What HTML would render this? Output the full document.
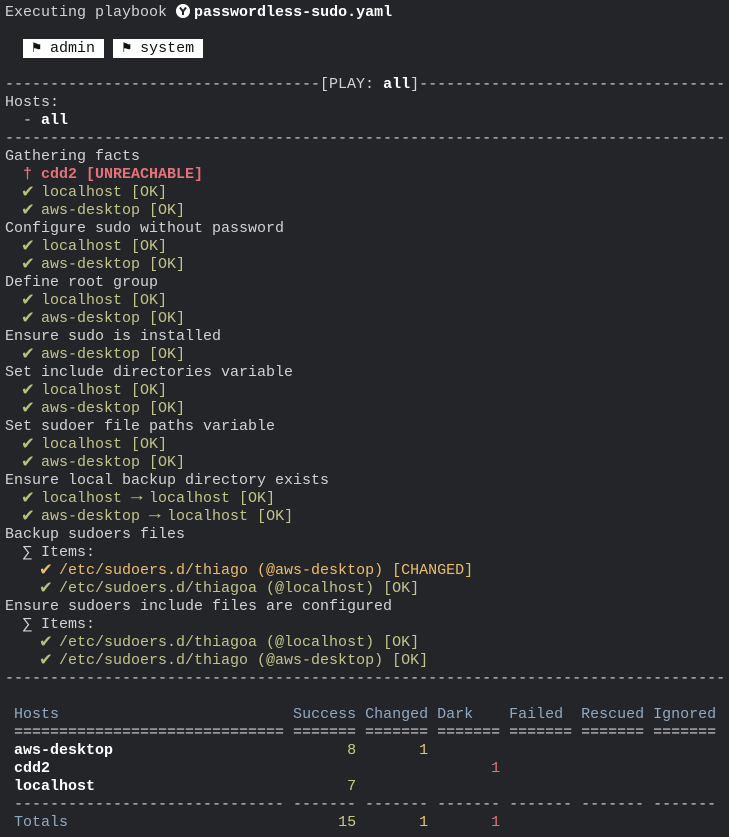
<!DOCTYPE html>
<html><head><meta charset="utf-8"><style>
html,body{margin:0;padding:0;background:#242529;width:729px;height:837px;overflow:hidden}
pre{margin:0;padding:4px 0 0 5px;font:15px/18px "Liberation Mono","DejaVu Sans Mono",monospace;color:#d2d2d2;white-space:pre}
.g{display:inline-block;width:9px;text-align:center;overflow:visible}
.k{display:inline-block;width:18px;text-align:left;font-weight:bold;transform:scale(1.25);transform-origin:3px 60%}
.a{display:inline-block;width:18px;text-align:left;transform:translateY(-2px) scale(1.3,1.1);transform-origin:0 50%}
.b{font-weight:bold;color:#fff}
.ok{color:#c2c48a}
.ok .k{color:#b9c07a}
.red{color:#e3727a;font-weight:bold}
.ch{color:#e9bd6e}
.hd{color:#8fa9c3}
.tag{background:#fff;color:#111;padding:1px 0}
.n{color:#c9c98a}.c{color:#eac56c}.r{color:#e3727a}
</style></head><body><pre>Executing playbook <span class="g"><svg width="14" height="14" viewBox="0 0 14 14" style="vertical-align:-2px"><circle cx="7" cy="7" r="7" fill="#fff"/><path d="M4 3.5L7 7.5L10 3.5M7 7.5V11" stroke="#242529" stroke-width="2" fill="none"/></svg></span> <span class="b">passwordless-sudo.yaml</span>

  <span class="tag"> <span class="g">⚑</span> admin </span> <span class="tag"> <span class="g">⚑</span> system </span>

-----------------------------------[PLAY: <span class="b">all</span>]----------------------------------
Hosts:
  - <span class="b">all</span>
--------------------------------------------------------------------------------
Gathering facts
  <span class="red"><span class="g">†</span> cdd2 [UNREACHABLE]</span>
  <span class="ok"><span class="k">✔</span>localhost [OK]</span>
  <span class="ok"><span class="k">✔</span>aws-desktop [OK]</span>
Configure sudo without password
  <span class="ok"><span class="k">✔</span>localhost [OK]</span>
  <span class="ok"><span class="k">✔</span>aws-desktop [OK]</span>
Define root group
  <span class="ok"><span class="k">✔</span>localhost [OK]</span>
  <span class="ok"><span class="k">✔</span>aws-desktop [OK]</span>
Ensure sudo is installed
  <span class="ok"><span class="k">✔</span>aws-desktop [OK]</span>
Set include directories variable
  <span class="ok"><span class="k">✔</span>localhost [OK]</span>
  <span class="ok"><span class="k">✔</span>aws-desktop [OK]</span>
Set sudoer file paths variable
  <span class="ok"><span class="k">✔</span>localhost [OK]</span>
  <span class="ok"><span class="k">✔</span>aws-desktop [OK]</span>
Ensure local backup directory exists
  <span class="ok"><span class="k">✔</span>localhost <span class="a">→</span>localhost [OK]</span>
  <span class="ok"><span class="k">✔</span>aws-desktop <span class="a">→</span>localhost [OK]</span>
Backup sudoers files
  <span class="g">∑</span> Items:
    <span class="ch"><span class="k">✔</span>/etc/sudoers.d/thiago (@aws-desktop) [CHANGED]</span>
    <span class="ok"><span class="k">✔</span>/etc/sudoers.d/thiagoa (@localhost) [OK]</span>
Ensure sudoers include files are configured
  <span class="g">∑</span> Items:
    <span class="ok"><span class="k">✔</span>/etc/sudoers.d/thiagoa (@localhost) [OK]</span>
    <span class="ok"><span class="k">✔</span>/etc/sudoers.d/thiago (@aws-desktop) [OK]</span>
--------------------------------------------------------------------------------

 <span class="hd">Hosts                          Success Changed Dark    Failed  Rescued Ignored</span>
 ============================== ======= ======= ======= ======= ======= =======
 <span class="b">aws-desktop</span>                          <span class="n">8</span>       <span class="c">1</span>
 <span class="b">cdd2</span>                                                 <span class="r">1</span>
 <span class="b">localhost</span>                            <span class="n">7</span>
 ------------------------------ ------- ------- ------- ------- ------- -------
 <span class="hd">Totals</span>                              <span class="n">15</span>       <span class="c">1</span>       <span class="r">1</span>
</pre></body></html>
